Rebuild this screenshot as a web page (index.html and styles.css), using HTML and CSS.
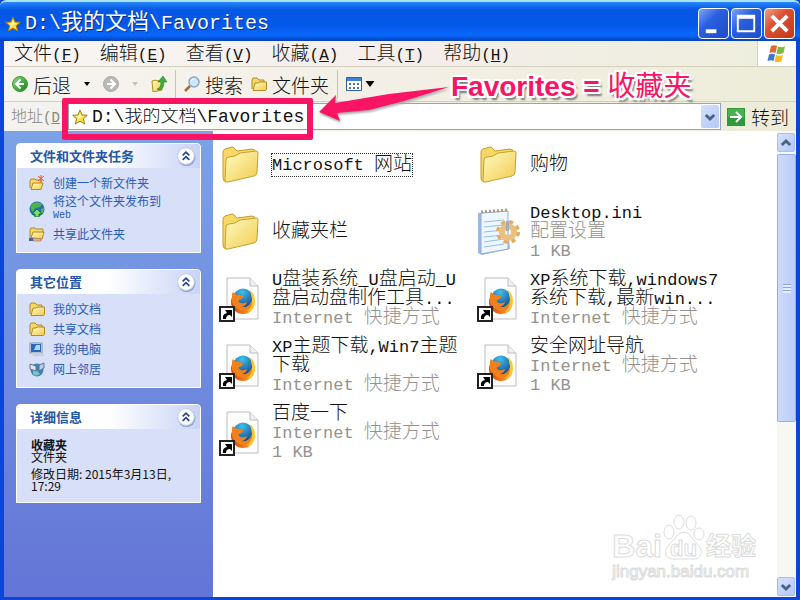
FILE: index.html
```html
<!DOCTYPE html>
<html lang="zh-CN">

<head>
    <meta charset="UTF-8">
    <meta name="viewport" content="width=device-width, initial-scale=1.0">
    <link rel="stylesheet" href="styles.css">
    <title>D:\我的文档\Favorites</title>
</head>

<body>
    <!-- Shared icons -->
    <svg class="sprite" aria-hidden="true">
        <defs>
            <linearGradient id="gold" x1="0" y1="0" x2="1" y2="1">
                <stop offset="0" stop-color="#fffbc0" />
                <stop offset="1" stop-color="#f2cb50" />
            </linearGradient>
            <linearGradient id="fox" x1="0" y1="0.6" x2="1" y2="0.4">
                <stop offset="0" stop-color="#dc4414" />
                <stop offset="0.55" stop-color="#f5861b" />
                <stop offset="1" stop-color="#ffd83a" />
            </linearGradient>
            <radialGradient id="globe" cx="0.45" cy="0.2" r="0.9">
                <stop offset="0" stop-color="#3fc0ee" />
                <stop offset="1" stop-color="#123f86" />
            </radialGradient>
            <linearGradient id="green" x1="0" y1="0" x2="1" y2="1">
                <stop offset="0" stop-color="#8fdc7c" />
                <stop offset="1" stop-color="#157f1b" />
            </linearGradient>
        </defs>
        <symbol id="star" viewBox="0 0 16 16">
            <path d="M8 1l2 5 5.300.3-4 3.500 1.400 5.200L8 12.200 3.300 15l1.400-5.200-4-3.500L6 6z" fill="#ffdf3a" stroke="#a87a10" stroke-width="1" stroke-linejoin="round" />
            <path d="M8 3.500L9 7l3 .4-4 1.300-3 3L6 9 3.500 7 7 6.800z" fill="#fff9b8" />
        </symbol>
        <symbol id="folder-big" viewBox="0 0 38 38">
            <path d="M2 6Q2 4 4 3l7-2q2 0 3 2l2 2 15-2q3 0 3 3v4L5 36q-3-1-3-4z" fill="#f6d866" stroke="#c39c2c" />
            <path d="M5 14q0-3 3-3l6-1 5-3 16-2q2 0 2 2l-1 19q0 3-3 4L7 36q-3 1-3-2z" fill="url(#gold)" stroke="#c79f30" />
        </symbol>
        <symbol id="folder" viewBox="0 0 16 16">
            <path d="M1 13V4l1-2h4l2 2h5v3" fill="#f5da69" stroke="#b08a22" />
            <path d="M2 14.500L4 7h3l1-1h7.500v7l-1 1.500z" fill="url(#gold)" stroke="#b08a22" />
        </symbol>
        <symbol id="firefox" viewBox="0 0 42 46">
            <path d="M8 2h23l8 8v33H8z" fill="#fdfdfe" stroke="#bdbdc4" />
            <path d="M31 2v8h8" fill="#f0f0f2" stroke="#bdbdc4" />
            <circle cx="24" cy="26" r="12" fill="url(#fox)" />
            <circle cx="24" cy="22" r="9.500" fill="url(#globe)" />
            <path d="M13 19q0-2 1-3 2 3 6 3l4 1q0 3-4 4-1 2 2 3 2 1 6-1-1 4-5 5 5 1 8-3 3-4 2-9 2 1 2 4 0 6-4 9-5 4-10 2-6-2-8-8z" fill="#f0811d" />
            <path d="M31 14q6 5 4.500 13Q34 34 28 37q6-7 5-14-1-5-2-9z" fill="#ffc832" />
            <path d="M1 31h14v14H1z" fill="#fff" stroke="#222" stroke-width="2" />
            <path d="M4 43q-1-5 4-6l-2-3h7v7l-2-2q-4 0-4 4z" fill="#000" />
        </symbol>
        <symbol id="ini" viewBox="0 0 44 48">
            <path d="M2 5l28-2 4 38-28 6-4-2z" fill="#9db8e6" />
            <path d="M5 5l27-2v38L5 46z" fill="#eef6ff" stroke="#93abd4" />
            <path d="M8 14l20-2M8 19l20-2M8 24l20-2M8 29l20-2M8 34l20-3M8 39l20-3" stroke="#8fc1ec" />
            <path d="M5 4l27-2" stroke="#a89a88" stroke-width="3" stroke-dasharray="2 2" />
            <circle cx="32" cy="24" r="10" fill="none" stroke="#e0ab62" stroke-width="4" stroke-dasharray="4 4" />
            <circle cx="32" cy="24" r="6" fill="none" stroke="#ecc07a" stroke-width="6" />
            <path d="M30 13h3v10h-3z" fill="#9daebb" />
        </symbol>
        <symbol id="chevrons" viewBox="0 0 18 18">
            <circle cx="9.500" cy="10" r="8" fill="#8c9cc8" />
            <circle cx="9" cy="9" r="7.500" fill="#fff" stroke="#c8d0e6" />
            <path d="M6 8.500l3-3 3 3M6 12.500l3-3 3 3" fill="none" stroke="#24458f" stroke-width="1.500" />
        </symbol>
    </svg>

    <div class="window">
        <header class="titlebar">
            <svg class="icon"><use href="#star" /></svg>
            <h1>D:\<span class="zh">我的文档</span>\Favorites</h1>
            <div class="controls">
                <button class="control" aria-label="最小化">
                    <svg viewBox="0 0 30 30"><path d="M7 21h11v4H7z" fill="#fff" /></svg>
                </button>
                <button class="control" aria-label="最大化">
                    <svg viewBox="0 0 30 30"><path d="M5 6h19v18H5zM7 10v12h15V10z" fill="#fff" fill-rule="evenodd" /></svg>
                </button>
                <button class="control close" aria-label="关闭">
                    <svg viewBox="0 0 30 30"><path d="M7 7l16 16M23 7L7 23" stroke="#fff" stroke-width="4" /></svg>
                </button>
            </div>
        </header>

        <nav class="menubar">
            <button>文件<span class="en">(<u>F</u>)</span></button>
            <button>编辑<span class="en">(<u>E</u>)</span></button>
            <button>查看<span class="en">(<u>V</u>)</span></button>
            <button>收藏<span class="en">(<u>A</u>)</span></button>
            <button>工具<span class="en">(<u>T</u>)</span></button>
            <button>帮助<span class="en">(<u>H</u>)</span></button>
            <div class="flag">
                <svg viewBox="0 0 20 20">
                    <path d="M4 2q3-1.500 6 0L8.500 9q-3-1.500-6 0z" fill="#e8642c" />
                    <path d="M11 2.500q3 1.500 7 0L16.500 9q-4 2-7 .5z" fill="#7cbc3c" />
                    <path d="M2 10.500q3-1.500 6 0L6.500 17q-3-1.500-6 0z" fill="#3c78d0" />
                    <path d="M9 11q4 1.500 7 0l-1.500 6.500q-3 1.500-7 0z" fill="#f4bc2c" />
                </svg>
            </div>
        </nav>

        <div class="toolbar">
            <button>
                <svg class="icon" viewBox="0 0 16 16"><circle cx="8" cy="8" r="7.500" fill="url(#green)" stroke="#3c9a3a" /><path d="M8.500 3.500L4 8l4.500 4.500M4.500 8H12" fill="none" stroke="#fff" stroke-width="2" /></svg>
                后退
            </button>
            <button class="drop" aria-label="后退列表"><svg class="caret" viewBox="0 0 6 4"><path d="M0 0h6L3 4z" /></svg></button>
            <button aria-label="前进">
                <svg class="icon" viewBox="0 0 16 16"><circle cx="8" cy="8" r="7.500" fill="#b9b9b5" stroke="#aaa" /><path d="M7.500 3.500L12 8l-4.500 4.500M11.500 8H4" fill="none" stroke="#fff" stroke-width="2" /></svg>
            </button>
            <button class="drop off" aria-label="前进列表"><svg class="caret" viewBox="0 0 6 4"><path d="M0 0h6L3 4z" /></svg></button>
            <button aria-label="向上">
                <svg class="icon" viewBox="0 0 16 16"><path d="M1 5l4-1 1 1 5-1v10l-9 2z" fill="url(#gold)" stroke="#b08a22" /><path d="M6 13q4-1 4-7H7l5-6 4 6h-3q0 7-5 8z" fill="#3fae3a" stroke="#1c7a22" stroke-width="0.500" /></svg>
            </button>
            <div class="separator"></div>
            <button>
                <svg class="icon" viewBox="0 0 16 16"><path d="M1 15l5-5" stroke="#a06a3c" stroke-width="2.500" /><circle cx="10" cy="6" r="5" fill="#cbe8fa" stroke="#8aa8c4" stroke-width="1.500" /><path d="M7 5q1-2 3-2" fill="none" stroke="#fff" /></svg>
                搜索
            </button>
            <button>
                <svg class="icon"><use href="#folder" /></svg>
                文件夹
            </button>
            <div class="separator"></div>
            <button class="views" aria-label="查看方式">
                <svg class="icon" viewBox="0 0 16 16"><path d="M0.500 1.500h15v13H.5z" fill="#fff" stroke="#2b5fa8" /><path d="M1 2h14v3H1z" fill="#3f82d6" /><path d="M3 7h2v2H3zM7 7h2v2H7zM11 7h2v2h-2zM3 11h2v2H3zM7 11h2v2H7zM11 11h2v2h-2z" fill="#4b6fae" /></svg>
                <svg class="caret" viewBox="0 0 6 4"><path d="M0 0h6L3 4z" /></svg>
            </button>
        </div>

        <form class="address">
            <label for="address">地址<span class="en">(<u>D</u>)</span></label>
            <div class="combo">
                <svg class="icon"><use href="#star" /></svg>
                <input id="address" type="text" value="D:\我的文档\Favorites">
                <button type="button" class="arrow" aria-label="展开">
                    <svg viewBox="0 0 10 10"><path d="M2 3.500l3 3 3-3" /></svg>
                </button>
            </div>
            <button type="button" class="go">
                <svg viewBox="0 0 18 18"><path d="M0 0h18v18H0z" fill="#2f9a3a" /><path d="M1 1h16v8H1z" fill="#4bb050" /><path d="M3 9h11M9 4l5 5-5 5" fill="none" stroke="#fff" stroke-width="2" /></svg>
                转到
            </button>

            <div class="highlight"></div>
            <svg class="pointer" viewBox="0 0 132 40">
                <path d="M131 4L71 11 17 20l1-8L1 29l21 9-3-8 32-3 35-9z" fill="#fa1464" />
            </svg>
            <p class="note">Favorites = <span>收藏夹</span></p>
        </form>

        <div class="content">
            <aside class="sidebar">
                <section class="panel">
                    <h2>文件和文件夹任务 <svg><use href="#chevrons" /></svg></h2>
                    <ul>
                        <li>
                            <svg class="icon" viewBox="0 0 16 16"><path d="M1 13V6l1-2h4l1 1h5v3" fill="#f5da69" stroke="#b08a22" /><path d="M2 14.500L4 8h10l-2 6.500z" fill="url(#gold)" stroke="#b08a22" /><path d="M12 0v7M9 1l6 5M15 1L9 6" stroke="#e8582c" /></svg>
                            <a href="#">创建一个新文件夹</a>
                        </li>
                        <li>
                            <svg class="icon" viewBox="0 0 16 16"><circle cx="8" cy="8" r="7.500" fill="#2a6fb4" /><path d="M2 4q5-5 11-1l-2 3-5 1-2 4q-3-2-2-7zM12 8l3-1q0 4-3 6z" fill="#4fb54a" /><path d="M8 8l5 5h-3v3H6v-3H3z" fill="#7be06a" stroke="#187a22" /></svg>
                            <a href="#">将这个文件夹发布到<br><small>Web</small></a>
                        </li>
                        <li>
                            <svg class="icon" viewBox="0 0 16 16"><path d="M1 12V4l1-2h4l1 1h7v3" fill="#f5da69" stroke="#b08a22" /><path d="M2 12l2-6h11l-2 7z" fill="url(#gold)" stroke="#b08a22" /><path d="M0 12h4v3H0z" fill="#3b62ae" /><path d="M4 12q4 0 8 1v2H4z" fill="#e8b48c" stroke="#9a5a3a" stroke-width="0.500" /></svg>
                            <a href="#">共享此文件夹</a>
                        </li>
                    </ul>
                </section>

                <section class="panel">
                    <h2>其它位置 <svg><use href="#chevrons" /></svg></h2>
                    <ul>
                        <li><svg class="icon"><use href="#folder" /></svg><a href="#">我的文档</a></li>
                        <li><svg class="icon"><use href="#folder" /></svg><a href="#">共享文档</a></li>
                        <li>
                            <svg class="icon" viewBox="0 0 16 16"><path d="M1 2h12v10H1z" fill="#e8edf4" stroke="#7d8da8" /><path d="M2 3h10v8H2z" fill="#2d68c0" /><path d="M5 9l2-5h4v5z" fill="#a8dcf8" /><path d="M3 12h11l1 3H4z" fill="#c9ced8" /></svg>
                            <a href="#">我的电脑</a>
                        </li>
                        <li>
                            <svg class="icon" viewBox="0 0 16 16"><circle cx="8" cy="9" r="6.500" fill="#3a84b8" /><path d="M4 5q4 0 3 4l4 4q-4 3-7 0z" fill="#7cc4c4" /><path d="M1 3l6 2v5L1 8z" fill="#dbe6f2" stroke="#5d7390" /><path d="M10 4l5-2v5l-5 3z" fill="#b9cbe0" stroke="#5d7390" /></svg>
                            <a href="#">网上邻居</a>
                        </li>
                    </ul>
                </section>

                <section class="panel">
                    <h2>详细信息 <svg><use href="#chevrons" /></svg></h2>
                    <div class="details">
                        <strong>收藏夹</strong>
                        <p>文件夹</p>
                        <p class="date">修改日期: 2015年3月13日,<br>17:29</p>
                    </div>
                </section>
            </aside>

            <main class="files">
                <div class="file">
                    <svg class="folder"><use href="#folder-big" /></svg>
                    <p><span class="selected"><span class="en">Microsoft </span>网站</span></p>
                </div>
                <div class="file">
                    <svg class="folder"><use href="#folder-big" /></svg>
                    <p>购物</p>
                </div>
                <div class="file">
                    <svg class="folder"><use href="#folder-big" /></svg>
                    <p>收藏夹栏</p>
                </div>
                <div class="file">
                    <svg class="ini"><use href="#ini" /></svg>
                    <p><span class="en">Desktop.ini</span><br><span class="info">配置设置<br><span class="en">1 KB</span></span></p>
                </div>
                <div class="file">
                    <svg class="shortcut"><use href="#firefox" /></svg>
                    <p><span class="en">U</span>盘装系统<span class="en">_U</span>盘启动<span class="en">_U</span><br>盘启动盘制作工具<span class="en">...</span><br><span class="info"><span class="en">Internet </span>快捷方式</span></p>
                </div>
                <div class="file">
                    <svg class="shortcut"><use href="#firefox" /></svg>
                    <p><span class="en">XP</span>系统下载<span class="en">,windows7</span><br>系统下载<span class="en">,</span>最新<span class="en">win...</span><br><span class="info"><span class="en">Internet </span>快捷方式</span></p>
                </div>
                <div class="file">
                    <svg class="shortcut"><use href="#firefox" /></svg>
                    <p><span class="en">XP</span>主题下载<span class="en">,Win7</span>主题<br>下载<br><span class="info"><span class="en">Internet </span>快捷方式</span></p>
                </div>
                <div class="file">
                    <svg class="shortcut"><use href="#firefox" /></svg>
                    <p>安全网址导航<br><span class="info"><span class="en">Internet </span>快捷方式<br><span class="en">1 KB</span></span></p>
                </div>
                <div class="file">
                    <svg class="shortcut"><use href="#firefox" /></svg>
                    <p>百度一下<br><span class="info"><span class="en">Internet </span>快捷方式<br><span class="en">1 KB</span></span></p>
                </div>

                <div class="watermark">
                    <div class="brand">
                        <span>Bai</span>
                        <div class="paw">
                            <svg viewBox="0 0 44 48">
                                <ellipse cx="7" cy="19" rx="5" ry="7" />
                                <ellipse cx="17" cy="9" rx="5" ry="7" />
                                <ellipse cx="29" cy="10" rx="5" ry="7" />
                                <ellipse cx="37" cy="21" rx="5" ry="6" />
                                <path d="M22 19q5 0 8 6l7 8q4 5 1 10-3 4-9 3H14q-7 1-10-4-2-5 2-9l7-8q4-6 9-6z" />
                            </svg>
                            <span>du</span>
                        </div>
                        <span class="exp">经验</span>
                    </div>
                    <p>jingyan.baidu.com</p>
                </div>
            </main>

            <div class="scrollbar">
                <button class="arrow" aria-label="向上滚动"><svg viewBox="0 0 10 10"><path d="M2 6.500l3-3 3 3" /></svg></button>
                <div class="thumb"></div>
                <button class="arrow down" aria-label="向下滚动"><svg viewBox="0 0 10 10"><path d="M2 3.500l3 3 3-3" /></svg></button>
            </div>
        </div>
    </div>
</body>

</html>
```

FILE: styles.css
```css
* {
    margin: 0;
    padding: 0;
    box-sizing: border-box;
}

body {
    font-family: "Liberation Mono", "Noto Sans CJK SC", monospace;
    font-size: 19px;
    font-weight: 300;
    line-height: 19px;
    color: #111;
    background-color: #0c3cc4;
}

button {
    display: flex;
    align-items: center;
    border: none;
    background: none;
    font: inherit;
    color: inherit;
    white-space: nowrap;
}

a {
    color: inherit;
    text-decoration: none;
}

svg {
    flex-shrink: 0;
}

.sprite {
    position: absolute;
    width: 0;
    height: 0;
}

.icon {
    width: 16px;
    height: 16px;
}

.en {
    font-family: "Liberation Mono", monospace;
    font-size: 17px;
}

.window {
    display: flex;
    flex-direction: column;
    min-height: 100vh;
    padding: 0 4px 3px;
    background-color: #0a46dc;
}

/* Title bar */
.titlebar {
    display: flex;
    align-items: center;
    gap: 4px;
    height: 41px;
    margin: 0 -4px;
    padding: 4px 5px 0;
    border-top: 2px solid #a8e4f4;
    border-radius: 6px 6px 0 0;
    background: linear-gradient(#2a86f8, #0458e4 20%, #0458ea 60%, #0868fc 85%, #0440b8);
    color: #fff;
}

.titlebar h1 {
    flex: 1;
    font-size: 20px;
    font-weight: 400;
    line-height: 24px;
    text-shadow: 1px 1px #0a2f8c;
}

.zh {
    font-size: 22px;
}

.controls {
    display: flex;
    gap: 2px;
}

.control {
    width: 31px;
    height: 31px;
    border: 1px solid #fff;
    border-radius: 4px;
    background: linear-gradient(135deg, #7da4f4, #2a5fe0 40%, #1c4cc8);
}

.control.close {
    background: linear-gradient(135deg, #f0a088, #dc5030 40%, #c03c1c);
}

/* Menu */
.menubar,
.toolbar,
.go,
.address label {
    font-family: "Noto Sans CJK SC", sans-serif;
}

.menubar {
    display: flex;
    gap: 19px;
    height: 26px;
    padding-left: 10px;
    border-bottom: 1px solid #d4d0c0;
    background: linear-gradient(90deg, #f8f6f4, #f4eeec 50%, #eeeedc);
}

.menubar button {
    display: block;
}

.menubar .en {
    font-size: 16px;
}

.flag {
    display: flex;
    align-items: center;
    justify-content: center;
    width: 39px;
    margin-left: auto;
    border-left: 1px solid #d4d0c0;
    background-color: #fff;
}

.flag svg {
    width: 20px;
    height: 20px;
}

/* Toolbar */
.toolbar {
    display: flex;
    align-items: center;
    gap: 8px;
    height: 35px;
    padding-left: 8px;
    border-bottom: 1px solid #d4d0c0;
    background: linear-gradient(90deg, #f6f4f0, #f3efe6 50%, #edecd8);
}

.toolbar button {
    gap: 5px;
}

.caret {
    width: 6px;
    height: 4px;
}

.drop {
    padding: 0 5px;
}

.off {
    fill: #c4c2b8;
}

.views .caret {
    width: 12px;
    height: 6px;
    margin-left: -3px;
}

.separator {
    width: 1px;
    height: 28px;
    background-color: #c8c4b4;
}

/* Address bar */
.address {
    position: relative;
    display: flex;
    align-items: center;
    height: 29px;
    padding-left: 4px;
    background: linear-gradient(90deg, #f4f2ee, #edecd8);
}

.address label {
    width: 60px;
    padding-left: 3px;
    font-size: 16px;
    white-space: nowrap;
    color: #888580;
}

.address .en {
    font-size: 14px;
}

.combo {
    display: flex;
    flex: 1;
    align-items: center;
    gap: 4px;
    height: 27px;
    padding: 1px 1px 1px 3px;
    border: 1px solid #8ea6c4;
    background-color: #fff;
}

.combo input {
    flex: 1;
    min-width: 0;
    padding-top: 2px;
    border: none;
    outline: none;
    background: none;
    font: inherit;
    font-size: 18px;
    color: #111;
}

.arrow {
    justify-content: center;
    width: 18px;
    height: 23px;
    border-radius: 2px;
    background: linear-gradient(135deg, #d4e0fc, #b4c8f6);
}

.arrow svg {
    width: 14px;
    height: 14px;
    fill: none;
    stroke: #4a6184;
    stroke-width: 2px;
}

.go {
    gap: 6px;
    padding: 0 7px 0 6px;
}

.go svg {
    width: 18px;
    height: 18px;
}

/* Annotation over the address bar */
.highlight {
    position: absolute;
    top: -4px;
    left: 58px;
    width: 251px;
    height: 42px;
    border: 6px solid #fa1464;
    border-radius: 2px;
    z-index: 2;
}

.pointer {
    position: absolute;
    top: -19px;
    left: 314px;
    width: 132px;
    height: 40px;
    filter: drop-shadow(1px 2px 1px #aaa);
    z-index: 2;
}

.note {
    position: absolute;
    top: -31px;
    left: 447px;
    font-family: "Liberation Sans", "Noto Sans CJK SC", sans-serif;
    font-size: 28px;
    font-weight: 700;
    line-height: 32px;
    white-space: nowrap;
    color: #fa1464;
    text-shadow: 2px 0 #fff, -2px 0 #fff, 0 2px #fff, 0 -2px #fff, 2px 2px #fff, -2px -2px #fff, 2px -2px #fff, -2px 2px #fff, 3px 4px 2px #777;
    z-index: 2;
}

.note span {
    font-weight: 400;
}

/* Content */
.content {
    display: flex;
    flex: 1;
    background-color: #fff;
}

.sidebar {
    display: flex;
    flex-direction: column;
    gap: 16px;
    width: 209px;
    padding: 12px;
    background: linear-gradient(#7ba2e7, #6375d6);
}

.panel {
    border: 1px solid #fff;
    border-radius: 4px 4px 0 0;
    background-color: #d8dff8;
    font-family: "Noto Sans CJK SC", sans-serif;
    font-size: 12px;
    font-weight: 400;
    line-height: 12px;
    color: #2a5cb8;
}

.panel h2 {
    display: flex;
    align-items: center;
    justify-content: space-between;
    height: 24px;
    padding: 0 4px 0 13px;
    border-radius: 3px 3px 0 0;
    background: linear-gradient(90deg, #fff 50%, #c8d4f7);
    font-size: 13px;
    font-weight: 700;
    color: #2256a8;
}

.panel h2 svg {
    width: 20px;
    height: 20px;
}

.panel ul {
    display: flex;
    flex-direction: column;
    gap: 4px;
    padding: 7px 12px 10px;
    list-style: none;
}

.panel li {
    display: flex;
    align-items: center;
    gap: 8px;
    min-height: 16px;
}

.panel small {
    font-family: "Liberation Mono", monospace;
    font-size: 10px;
}

.details {
    padding: 10px 14px;
    color: #111;
}

.details .date {
    margin-top: 5px;
}

/* File list */
.files {
    position: relative;
    display: grid;
    flex: 1;
    grid-template-columns: 258px 1fr;
    grid-auto-rows: 67px;
    padding-left: 5px;
}

.file {
    display: flex;
    align-items: center;
    gap: 10px;
    white-space: nowrap;
}

.file svg {
    width: 44px;
    height: 46px;
}

.file .folder {
    height: 38px;
}

.file .ini {
    height: 48px;
}

.file p {
    padding-top: 2px;
    line-height: 19px;
}

.info {
    color: #96928e;
}

.selected {
    outline: 1px dotted #333;
}

.watermark {
    position: absolute;
    right: 21px;
    bottom: 14px;
    font-family: "Liberation Sans", "Noto Sans CJK SC", sans-serif;
    font-weight: 700;
    color: #fff;
    -webkit-text-stroke: 1px #dcdcdc;
}

.brand {
    display: flex;
    align-items: flex-end;
    font-size: 32px;
    line-height: 30px;
}

.brand .exp {
    font-size: 25px;
}

.paw {
    position: relative;
    width: 44px;
    height: 48px;
}

.paw svg {
    width: 44px;
    height: 48px;
    fill: #fff;
    stroke: #dcdcdc;
}

.paw span {
    position: absolute;
    right: 9px;
    bottom: 0;
    font-size: 22px;
    line-height: 24px;
}

.watermark p {
    font-size: 17px;
    font-weight: 400;
    line-height: 22px;
}

/* Scrollbar */
.scrollbar {
    display: flex;
    flex-direction: column;
    width: 19px;
    padding: 2px 0 1px;
    background-color: #f8f8f2;
}

.scrollbar .arrow {
    height: 19px;
    border: 1px solid #a9bfee;
}

.thumb {
    flex: 0 1 268px;
    margin-top: 2px;
    border: 1px solid #98b0e4;
    border-radius: 2px;
    background: repeating-linear-gradient(#8ca6e2 0 1px, #e4ecff 1px 3px) center / 8px 9px no-repeat, linear-gradient(90deg, #ccdafd, #bccdf9);
}

.down {
    margin-top: auto;
}
```
